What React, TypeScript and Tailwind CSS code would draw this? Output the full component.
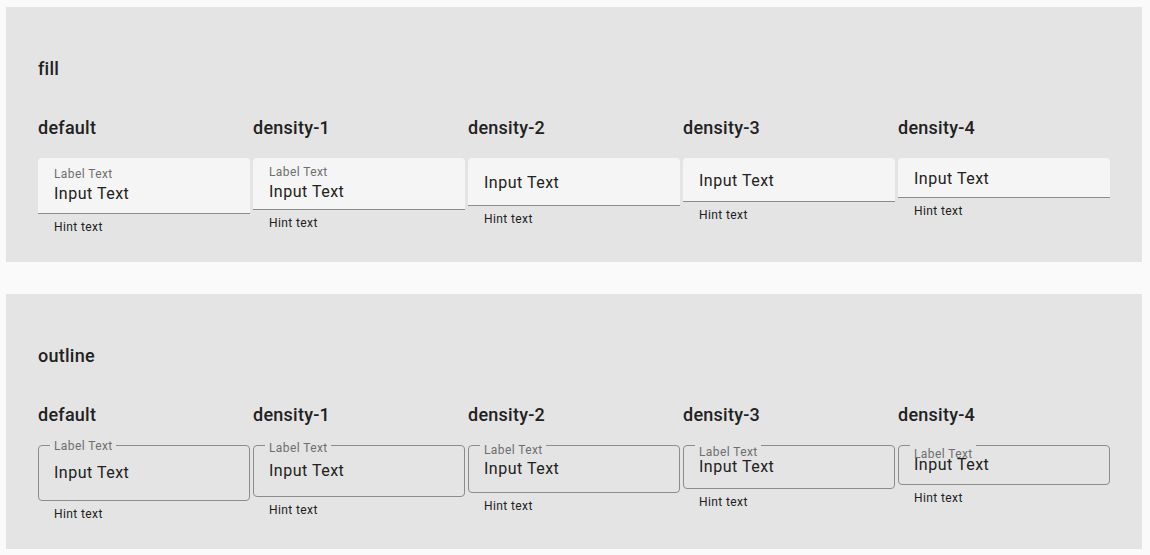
import React from 'react';

type Density = {
  name: string;
  height: string;
  labelTop: string;
};

const densities: Density[] = [
  { name: 'default', height: 'h-[56px]', labelTop: 'top-[-8px]' },
  { name: 'density-1', height: 'h-[52px]', labelTop: 'top-[-6px]' },
  { name: 'density-2', height: 'h-[48px]', labelTop: 'top-[-4px]' },
  { name: 'density-3', height: 'h-[44px]', labelTop: 'top-[-2px]' },
  { name: 'density-4', height: 'h-[40px]', labelTop: 'top-0' },
];

const FillField: React.FC<{ d: Density; showLabel: boolean }> = ({ d, showLabel }) => (
  <div>
    <div
      className={`${d.height} flex flex-col justify-center rounded-t bg-[#f5f5f5] border-b border-[#8c8c8c] px-4 ${
        showLabel ? '' : 'pt-[2px]'
      }`}
    >
      {showLabel && (
        <span className="text-xs leading-4 tracking-[0.4px] text-[#6e6e6e]">Label Text</span>
      )}
      <span className="text-base leading-6 tracking-[0.5px] text-[#212121]">Input Text</span>
    </div>
    <div className="mt-[5px] px-4 text-xs leading-4 tracking-[0.4px] text-[#212121]">Hint text</div>
  </div>
);

const OutlineField: React.FC<{ d: Density }> = ({ d }) => (
  <div>
    <div className={`${d.height} relative flex items-center rounded border border-[#8c8c8c] px-[15px]`}>
      <span className="absolute -top-px left-[11px] h-px w-[66px] bg-[#e4e4e4]" />
      <span
        className={`absolute ${d.labelTop} left-[15px] text-xs leading-4 tracking-[0.4px] text-[#6e6e6e]`}
      >
        Label Text
      </span>
      <span className="text-base leading-6 tracking-[0.5px] text-[#212121]">Input Text</span>
    </div>
    <div className="mt-[5px] px-4 text-xs leading-4 tracking-[0.4px] text-[#212121]">Hint text</div>
  </div>
);

const Section: React.FC<{ title: string; variant: 'fill' | 'outline' }> = ({ title, variant }) => (
  <section className="h-[255px] bg-[#e4e4e4] pl-8 pt-[50px]">
    <h2 className="text-lg leading-6 font-medium tracking-[0.25px] text-[#212121]">{title}</h2>
    <div className="mt-[35px] flex gap-[3px]">
      {densities.map((d, i) => (
        <div key={d.name} className="w-[212px]">
          <h3 className="text-lg leading-6 font-medium tracking-[0.25px] text-[#212121]">{d.name}</h3>
          <div className="mt-[18px]">
            {variant === 'fill' ? <FillField d={d} showLabel={i < 2} /> : <OutlineField d={d} />}
          </div>
        </div>
      ))}
    </div>
  </section>
);

const App: React.FC = () => {
  return (
    <div className="min-h-screen bg-[#fafafa] pt-[7px] pl-[6px] pr-[8px] font-['Roboto',sans-serif]">
      <div className="flex flex-col gap-8">
        <Section title="fill" variant="fill" />
        <Section title="outline" variant="outline" />
      </div>
    </div>
  );
};

export default App;
